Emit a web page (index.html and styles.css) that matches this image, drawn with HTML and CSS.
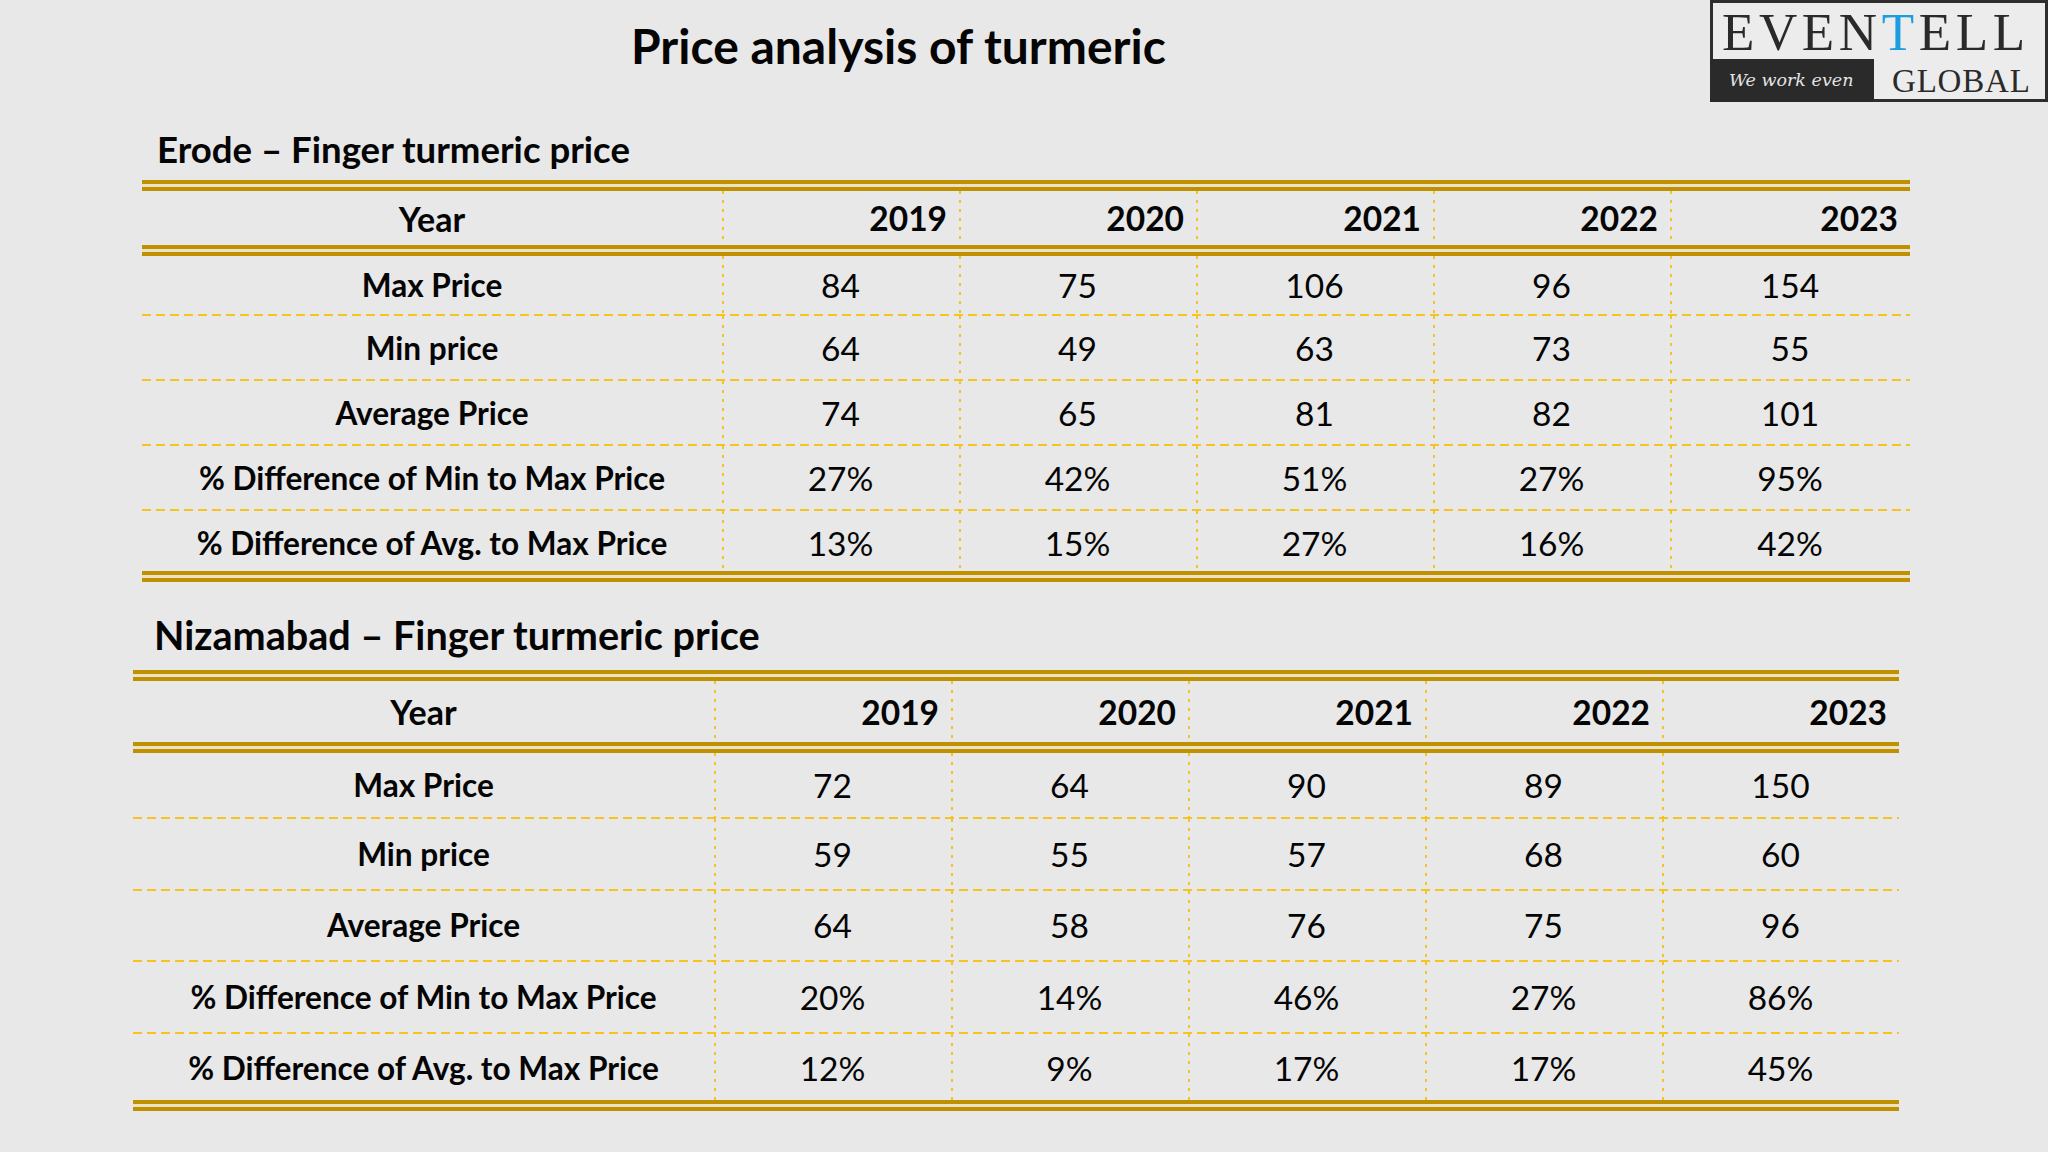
FILE: index.html
```html
<!DOCTYPE html>
<html lang="en">
<head>
<meta charset="utf-8">
<title>Price analysis of turmeric</title>
<link rel="stylesheet" href="styles.css">
</head>
<body>
<div class="slide">
  <header class="top">
    <h1 class="title">Price analysis of turmeric</h1>
    <div class="logo">
      <div class="logo-top">EVEN<span class="logo-t">T</span>ELL</div>
      <div class="logo-bottom">
        <div class="logo-tag">We work even</div>
        <div class="logo-global">GLOBAL</div>
      </div>
    </div>
  </header>

  <section class="block erode">
    <h2 class="subtitle">Erode – Finger turmeric price</h2>
    <div class="ptable">
      <div class="rule"></div>
      <div class="trow head">
        <div class="cell label">Year</div>
        <div class="cell yr">2019</div>
        <div class="cell yr">2020</div>
        <div class="cell yr">2021</div>
        <div class="cell yr">2022</div>
        <div class="cell yr">2023</div>
      </div>
      <div class="rule"></div>
      <div class="tbody">
        <div class="trow">
          <div class="cell label">Max Price</div>
          <div class="cell num">84</div><div class="cell num">75</div><div class="cell num">106</div><div class="cell num">96</div><div class="cell num">154</div>
        </div>
        <div class="trow">
          <div class="cell label">Min price</div>
          <div class="cell num">64</div><div class="cell num">49</div><div class="cell num">63</div><div class="cell num">73</div><div class="cell num">55</div>
        </div>
        <div class="trow">
          <div class="cell label">Average Price</div>
          <div class="cell num">74</div><div class="cell num">65</div><div class="cell num">81</div><div class="cell num">82</div><div class="cell num">101</div>
        </div>
        <div class="trow">
          <div class="cell label">% Difference of Min to Max Price</div>
          <div class="cell num">27%</div><div class="cell num">42%</div><div class="cell num">51%</div><div class="cell num">27%</div><div class="cell num">95%</div>
        </div>
        <div class="trow">
          <div class="cell label">% Difference of Avg. to Max Price</div>
          <div class="cell num">13%</div><div class="cell num">15%</div><div class="cell num">27%</div><div class="cell num">16%</div><div class="cell num">42%</div>
        </div>
      </div>
      <div class="rule"></div>
    </div>
  </section>

  <section class="block nizam">
    <h2 class="subtitle">Nizamabad – Finger turmeric price</h2>
    <div class="ptable">
      <div class="rule"></div>
      <div class="trow head">
        <div class="cell label">Year</div>
        <div class="cell yr">2019</div>
        <div class="cell yr">2020</div>
        <div class="cell yr">2021</div>
        <div class="cell yr">2022</div>
        <div class="cell yr">2023</div>
      </div>
      <div class="rule"></div>
      <div class="tbody">
        <div class="trow">
          <div class="cell label">Max Price</div>
          <div class="cell num">72</div><div class="cell num">64</div><div class="cell num">90</div><div class="cell num">89</div><div class="cell num">150</div>
        </div>
        <div class="trow">
          <div class="cell label">Min price</div>
          <div class="cell num">59</div><div class="cell num">55</div><div class="cell num">57</div><div class="cell num">68</div><div class="cell num">60</div>
        </div>
        <div class="trow">
          <div class="cell label">Average Price</div>
          <div class="cell num">64</div><div class="cell num">58</div><div class="cell num">76</div><div class="cell num">75</div><div class="cell num">96</div>
        </div>
        <div class="trow">
          <div class="cell label">% Difference of Min to Max Price</div>
          <div class="cell num">20%</div><div class="cell num">14%</div><div class="cell num">46%</div><div class="cell num">27%</div><div class="cell num">86%</div>
        </div>
        <div class="trow">
          <div class="cell label">% Difference of Avg. to Max Price</div>
          <div class="cell num">12%</div><div class="cell num">9%</div><div class="cell num">17%</div><div class="cell num">17%</div><div class="cell num">45%</div>
        </div>
      </div>
      <div class="rule"></div>
    </div>
  </section>
</div>
</body>
</html>
```

FILE: styles.css
```css
html, body {
  margin: 0;
  padding: 0;
}

body {
  background: #e8e8e8;
  font-family: Lato, "Open Sans", sans-serif;
  color: #050505;
}

.slide {
  width: 2048px;
  height: 1152px;
  overflow: hidden;
}

/* ---------- top bar ---------- */
.top {
  display: flex;
  align-items: flex-start;
  height: 102px;
}

.title {
  margin: 22px 0 0 0;
  padding-left: 631px;
  font-size: 48px;
  line-height: 48px;
  font-weight: 700;
  white-space: nowrap;
}

.logo {
  margin-left: auto;
  width: 338px;
  height: 102px;
  box-sizing: border-box;
  border: 3px solid #2e2e2e;
  background: #ececec;
  display: flex;
  flex-direction: column;
}

.logo-top {
  height: 59px;
  padding: 3px 0 0 9px;
  box-sizing: border-box;
  font-family: "Liberation Serif", "Times New Roman", serif;
  font-size: 53px;
  line-height: 53px;
  letter-spacing: 4.6px;
  color: #2a2a2a;
  white-space: nowrap;
}

.logo-t {
  color: #1c9de0;
}

.logo-bottom {
  flex: 1;
  display: flex;
}

.logo-tag {
  width: 164px;
  margin-left: -3px;
  margin-bottom: -3px;
  padding-left: 19px;
  box-sizing: border-box;
  background: #2a2a2a;
  color: #e4e4e4;
  font-family: "DejaVu Serif", "Liberation Serif", serif;
  font-style: italic;
  font-size: 17.5px;
  line-height: 42px;
  white-space: nowrap;
}

.logo-global {
  padding-left: 18px;
  padding-top: 4px;
  font-family: "Liberation Serif", "Times New Roman", serif;
  font-size: 33px;
  line-height: 36px;
  letter-spacing: 0.8px;
  color: #2a2a2a;
}

/* ---------- sections ---------- */
.subtitle {
  margin: 0;
  line-height: 37px;
  font-weight: 700;
  white-space: nowrap;
}

.erode .subtitle {
  margin-top: 29px;
  padding-left: 157px;
  font-size: 36.6px;
}

.erode .ptable {
  margin-top: 12px;
  margin-left: 142px;
  width: 1768px;
  --c1: 580px;
  --cw: 237px;
  --rowh: 65px;
  --edgeh: 60px;
  --headh: 54px;
}

.nizam .subtitle {
  margin-top: 34px;
  padding-left: 154px;
  font-size: 39.6px;
}

.nizam .ptable {
  margin-top: 17px;
  margin-left: 133px;
  width: 1766px;
  --c1: 581px;
  --cw: 237px;
  --rowh: 71.5px;
  --edgeh: 66px;
  --headh: 61px;
}

/* ---------- table ---------- */
.rule {
  height: 11px;
  background: linear-gradient(#bf9000 0 4px, #ece3c6 4px 7px, #bf9000 7px 11px);
}

.trow {
  display: grid;
  grid-template-columns: var(--c1) repeat(4, var(--cw)) 1fr;
  height: var(--rowh);
  box-sizing: border-box;
}

.trow.head {
  height: var(--headh);
}

.tbody .trow {
  background: repeating-linear-gradient(to right, #f7c31f 0 9px, transparent 9px 14px) left bottom / 100% 2px no-repeat;
}

.tbody .trow:first-child {
  height: var(--edgeh);
}

.tbody .trow:last-child {
  height: var(--edgeh);
  background: none;
}

.cell {
  display: flex;
  align-items: center;
  justify-content: center;
  white-space: nowrap;
}

.cell + .cell {
  background: repeating-linear-gradient(to bottom, #f4c22a 0 3px, transparent 3px 9px) left top / 2px 100% no-repeat;
}

.label {
  font-weight: 700;
  font-size: 31.6px;
}

.tbody .cell {
  padding-bottom: 2px;
}

.tbody .trow:last-child .cell {
  padding-bottom: 0;
  padding-top: 3px;
}

.head .label {
  font-size: 34px;
}

.yr {
  justify-content: flex-end;
  padding-right: 12px;
  font-weight: 700;
  font-size: 33.5px;
}

.num {
  font-weight: 400;
  font-size: 33.5px;
}
```
